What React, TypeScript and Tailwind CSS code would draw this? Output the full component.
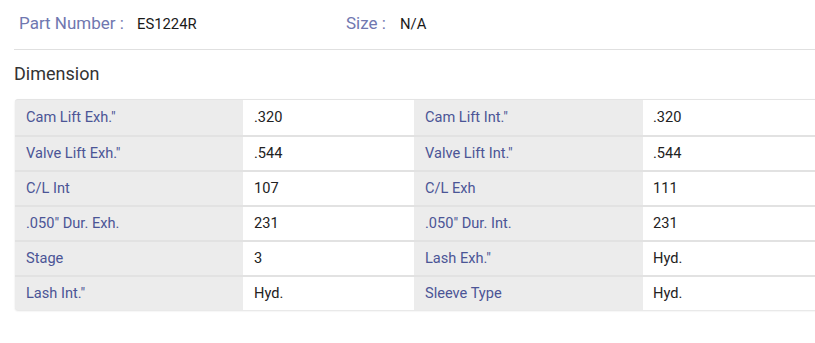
import React from "react";

const rows: [string, string, string, string][] = [
  ["Cam Lift Exh.\"", ".320", "Cam Lift Int.\"", ".320"],
  ["Valve Lift Exh.\"", ".544", "Valve Lift Int.\"", ".544"],
  ["C/L Int", "107", "C/L Exh", "111"],
  [".050\" Dur. Exh.", "231", ".050\" Dur. Int.", "231"],
  ["Stage", "3", "Lash Exh.\"", "Hyd."],
  ["Lash Int.\"", "Hyd.", "Sleeve Type", "Hyd."],
];

export default function App() {
  return (
    <div className="w-[815px] h-[343px] bg-white overflow-hidden" style={{ fontFamily: "Roboto, 'Liberation Sans', sans-serif" }}>
      <div className="flex items-center h-[48px] pl-[19px]">
        <span className="text-[17px] text-[#7077b0] w-[118px]">Part Number :</span>
        <span className="text-[14.8px] text-[#1a1a1a] w-[209px]">ES1224R</span>
        <span className="text-[17px] text-[#7077b0] w-[54px]">Size :</span>
        <span className="text-[14.8px] text-[#1a1a1a]">N/A</span>
      </div>
      <div className="ml-[14px] mt-[1px] border-t border-[#e0e0e0]"></div>
      <div className="ml-[14px] mt-[11px] text-[18px] leading-[26px] text-[#333]">Dimension</div>
      <div className="ml-[15px] mt-[12px] w-[810px] bg-[#ececec] rounded-[3px] shadow-[0_1px_2px_rgba(0,0,0,0.12)] border-t border-[#e4e4e4]">
        {rows.map((r, i) => (
          <div key={i} className={`flex h-[35px] ${i > 0 ? "border-t-2 border-[#e2e2e2]" : ""}`}>
            <div className="w-[228px] flex items-center pl-[11px] pt-[1px] text-[14.6px] text-[#4b5596]">{r[0]}</div>
            <div className="w-[171px] flex items-center pl-[11px] pt-[1px] text-[14.6px] text-[#222] bg-white">{r[1]}</div>
            <div className="w-[229px] flex items-center pl-[11px] pt-[1px] text-[14.6px] text-[#4b5596]">{r[2]}</div>
            <div className="flex-1 flex items-center pl-[10px] pt-[1px] text-[14.6px] text-[#222] bg-white">{r[3]}</div>
          </div>
        ))}
      </div>
    </div>
  );
}
